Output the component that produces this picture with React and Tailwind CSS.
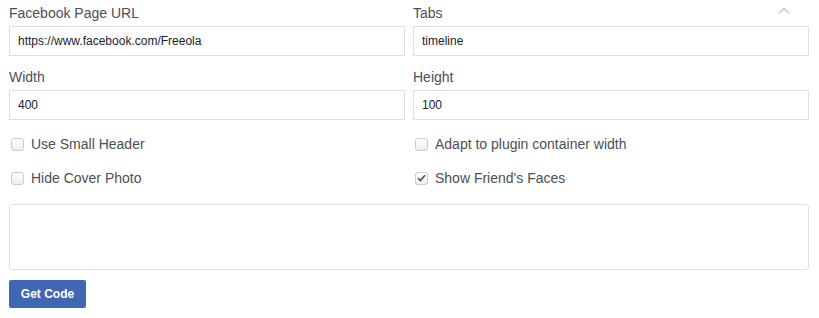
import React, { useState } from 'react';

const font = { fontFamily: '"Liberation Sans", Arial, sans-serif' };

const Field = ({ label, value }) => (
  <div className="flex flex-col">
    <label className="text-[14px] leading-[20px] text-[#4b4f56] mb-[3px]">{label}</label>
    <input
      type="text"
      defaultValue={value}
      className="h-[30px] w-full border border-[#dddfe2] bg-white px-[8px] text-[12px] text-[#1d2129] outline-none"
    />
  </div>
);

const Check = ({ label, checked }) => (
  <label className="flex items-center h-[20px] pl-[2px] text-[14px] text-[#4b4f56]">
    <span className="flex items-center justify-center w-[13px] h-[13px] rounded-[3px] border border-[#c9ccd1] bg-gradient-to-b from-white to-[#ebedf0] mr-[7px]">
      {checked && (
        <svg width="9" height="8" viewBox="0 0 9 8">
          <path d="M1 4.2 L3.4 6.5 L8 1.2" fill="none" stroke="#4b4f56" strokeWidth="1.6" />
        </svg>
      )}
    </span>
    {label}
  </label>
);

export default function App() {
  const [code] = useState('');

  return (
    <div className="relative w-[819px] h-[318px] bg-white pl-[9px] pr-[10px] pt-[3px]" style={font}>
      <svg className="absolute left-[778px] top-[7px]" width="12" height="7" viewBox="0 0 12 7">
        <path d="M1 6 L6 1.5 L11 6" fill="none" stroke="#c4c6ca" strokeWidth="1.4" />
      </svg>

      <div className="grid grid-cols-2 gap-x-[8px] gap-y-[11px]">
        <Field label="Facebook Page URL" value="https://www.facebook.com/Freeola" />
        <Field label="Tabs" value="timeline" />
        <Field label="Width" value="400" />
        <Field label="Height" value="100" />
      </div>

      <div className="grid grid-cols-2 gap-x-[8px] gap-y-[14px] mt-[14px]">
        <Check label="Use Small Header" />
        <Check label="Adapt to plugin container width" />
        <Check label="Hide Cover Photo" />
        <Check label="Show Friend's Faces" checked />
      </div>

      <textarea
        defaultValue={code}
        className="block mt-[16px] w-full h-[66px] border border-[#dddfe2] rounded-[3px] resize-none outline-none"
      />

      <button className="mt-[10px] h-[28px] w-[77px] bg-[#4267b2] rounded-[2px] text-white text-[12px] font-bold">
        Get Code
      </button>
    </div>
  );
}
